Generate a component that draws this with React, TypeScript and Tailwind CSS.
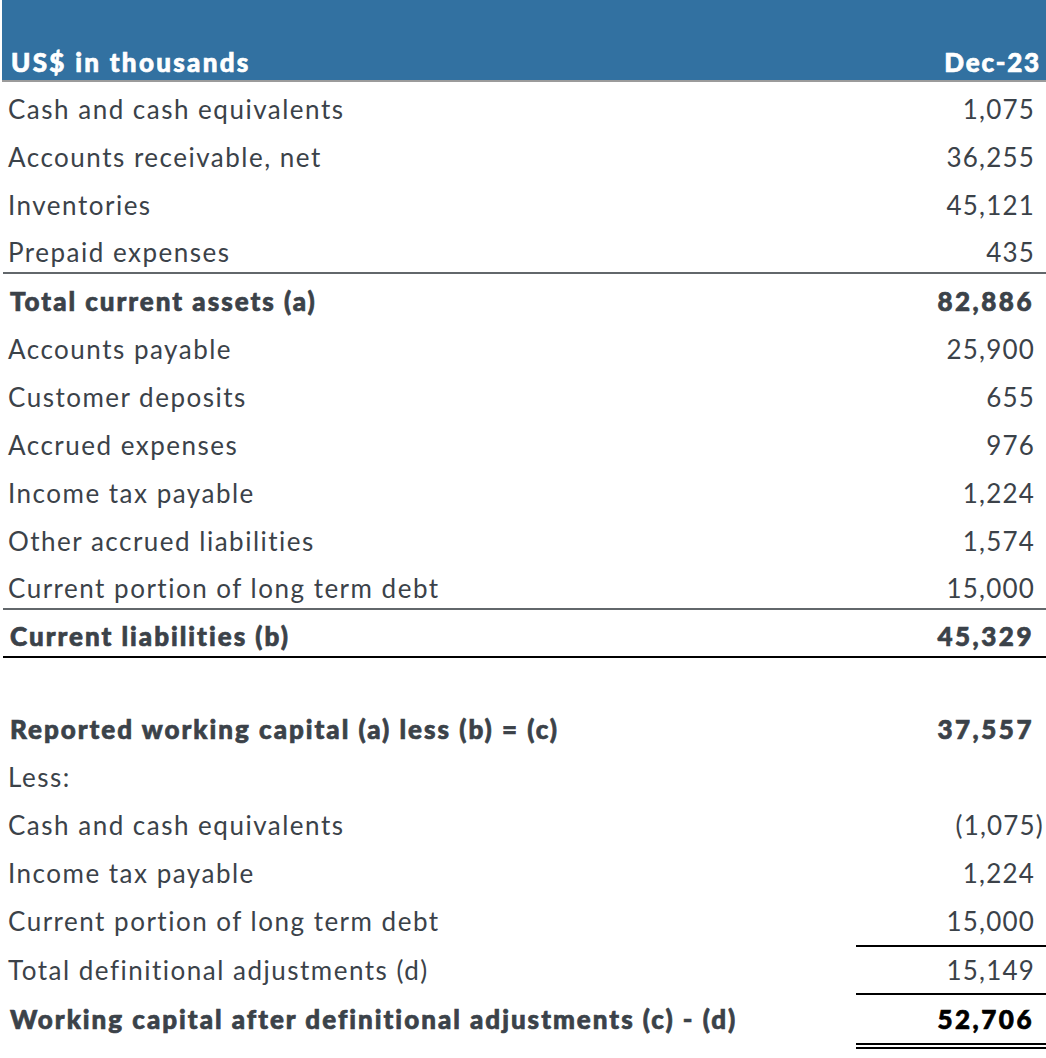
import React from "react";

type Row = {
  label: string;
  value: string;
  bold?: boolean;
  line?: "gray" | "black";
};

const top: Row[] = [
  { label: "Cash and cash equivalents", value: "1,075" },
  { label: "Accounts receivable, net", value: "36,255" },
  { label: "Inventories", value: "45,121" },
  { label: "Prepaid expenses", value: "435", line: "gray" },
  { label: "Total current assets (a)", value: "82,886", bold: true },
  { label: "Accounts payable", value: "25,900" },
  { label: "Customer deposits", value: "655" },
  { label: "Accrued expenses", value: "976" },
  { label: "Income tax payable", value: "1,224" },
  { label: "Other accrued liabilities", value: "1,574" },
  { label: "Current portion of long term debt", value: "15,000", line: "gray" },
  { label: "Current liabilities (b)", value: "45,329", bold: true, line: "black" },
];

// regular / heavy text styles, Lato stretched to Avenir-like widths
const reg = "text-[26px] tracking-[1.5px]";
const regNum = "text-[26px] tracking-[1.2px]";
const heavy = "text-[26px] font-black tracking-[2px] [-webkit-text-stroke:0.7px_currentColor]";
const heavyNum = "text-[26px] font-black tracking-[2.5px] [-webkit-text-stroke:0.7px_currentColor]";

const LineRow = ({ row }: { row: Row }) => {
  const border =
    row.line === "gray"
      ? "border-b-2 border-[#62676b]"
      : row.line === "black"
        ? "border-b-2 border-black"
        : "";
  return (
    <div className={`ml-[3px] flex h-[48px] items-center justify-between pt-[6px] ${border}`}>
      <span className={row.bold ? `pl-[7px] ${heavy}` : `pl-[5px] ${reg}`}>{row.label}</span>
      <span className={row.bold ? `pr-[12px] ${heavyNum}` : `pr-[11px] ${regNum}`}>{row.value}</span>
    </div>
  );
};

export default function App() {
  return (
    <div
      className="w-[1046px] h-[1058px] bg-white text-[#3b4249] [font-variant-ligatures:none]"
      style={{ fontFamily: "Lato, 'Open Sans', sans-serif" }}
    >
      <div className="ml-[2px] flex h-[82px] items-end justify-between border-b-2 border-[#9b9b9b] bg-[#3271a1] pb-[5px] text-[26px] leading-none font-black text-white [-webkit-text-stroke:0.7px_white]">
        <span className="pl-[9px] tracking-[2.3px]">US$ in thousands</span>
        <span className="pr-[5px] tracking-[1.8px]">Dec-23</span>
      </div>

      {top.map((r) => (
        <LineRow key={r.label} row={r} />
      ))}

      <div className="h-[47px]" />

      <div className="ml-[3px] flex h-[48px] items-center justify-between">
        <span className={`pl-[7px] ${heavy}`}>Reported working capital (a) less (b) = (c)</span>
        <span className={`pr-[12px] ${heavyNum}`}>37,557</span>
      </div>
      <div className={`ml-[3px] flex h-[48px] items-center pl-[5px] ${reg}`}>Less:</div>
      <div className="ml-[3px] flex h-[48px] items-center justify-between">
        <span className={`pl-[5px] ${reg}`}>Cash and cash equivalents</span>
        <span className={`pr-[2px] ${regNum}`}>(1,075)</span>
      </div>
      <div className="ml-[3px] flex h-[48px] items-center justify-between">
        <span className={`pl-[5px] ${reg}`}>Income tax payable</span>
        <span className={`pr-[11px] ${regNum}`}>1,224</span>
      </div>
      <div className="ml-[3px] flex h-[48px] items-center justify-between">
        <span className={`pl-[5px] ${reg}`}>Current portion of long term debt</span>
        <span className={`pr-[11px] ${regNum}`}>15,000</span>
      </div>
      <div className="ml-[856px] h-[2px] bg-black" />
      <div className="ml-[3px] flex h-[46px] items-center justify-between">
        <span className={`pl-[5px] ${reg}`}>Total definitional adjustments (d)</span>
        <span className={`pr-[11px] ${regNum}`}>15,149</span>
      </div>
      <div className="ml-[856px] h-[2px] bg-black" />
      <div className="ml-[3px] flex h-[48px] items-center justify-between">
        <span className={`pl-[7px] ${heavy}`}>Working capital after definitional adjustments (c) - (d)</span>
        <span className={`pr-[12px] text-black ${heavyNum}`}>52,706</span>
      </div>
      <div className="ml-[856px] h-[6px] border-y-2 border-black" />
    </div>
  );
}
